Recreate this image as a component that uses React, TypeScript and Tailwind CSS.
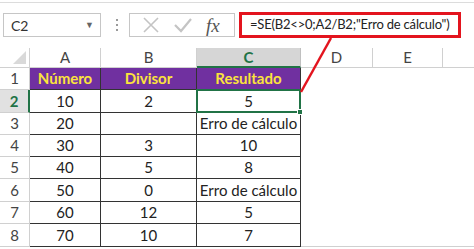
import React from "react";

const rows: { n: number; a: string; b: string; c: string }[] = [
  { n: 2, a: "10", b: "2", c: "5" },
  { n: 3, a: "20", b: "", c: "Erro de cálculo" },
  { n: 4, a: "30", b: "3", c: "10" },
  { n: 5, a: "40", b: "5", c: "8" },
  { n: 6, a: "50", b: "0", c: "Erro de cálculo" },
  { n: 7, a: "60", b: "12", c: "5" },
  { n: 8, a: "70", b: "10", c: "7" },
];

const font = { fontFamily: "Lato, 'Open Sans', sans-serif" };

export default function App() {
  return (
    <div className="relative w-[474px] h-[249px] overflow-hidden bg-white" style={font}>
      {/* formula bar area */}
      <div className="mt-[2px] border-t border-[#dcdcdc] h-[46px] flex items-start pt-[10px]">
        <div className="ml-[3px] w-[98px] h-[24px] border border-[#c6c6c6] flex items-center justify-between pl-[7px] pr-[6px] text-[14px] text-[#333]">
          <span>C2</span>
          <span className="text-[9px] text-[#666]">▼</span>
        </div>
        <div className="ml-[14px] w-[3px] h-[24px] flex flex-col items-center justify-center gap-[3px]">
          <span className="w-[2px] h-[2px] bg-[#9a9a9a]" />
          <span className="w-[2px] h-[2px] bg-[#9a9a9a]" />
          <span className="w-[2px] h-[2px] bg-[#9a9a9a]" />
        </div>
        <div className="ml-[11px] w-[106px] h-[24px] border border-[#c6c6c6] flex items-center">
          <svg width="18" height="18" viewBox="0 0 18 18" className="ml-[12px]">
            <path d="M2 2 L16 16 M16 2 L2 16" stroke="#c4c4c4" strokeWidth="1.6" />
          </svg>
          <svg width="20" height="18" viewBox="0 0 20 18" className="ml-[13px]">
            <path d="M2 9 L8 15 L18 3" stroke="#c4c4c4" strokeWidth="2.2" fill="none" />
          </svg>
          <span
            className="ml-[13px] text-[19px] italic text-[#555] leading-none"
            style={{ fontFamily: "'Liberation Serif', serif" }}
          >
            fx
          </span>
        </div>
        <div className="ml-[4px] mt-[-1px] w-[222px] h-[26px] border-[3px] border-[#e3141e] flex items-center pl-[8px] text-[13px] tracking-[-0.2px] text-[#222] whitespace-nowrap">
          =SE(B2&lt;&gt;0;A2/B2;"Erro de cálculo")
        </div>
      </div>

      {/* sheet grid */}
      <div className="grid grid-cols-[30px_71px_96px_104px_72px_70px_1fr] grid-rows-[20px_22px_23px_22px_22px_22px_23px_22px_23px] text-[15px] text-[#222]">
        {/* column headers */}
        <div className="relative border-r border-b border-[#d0d0d0]">
          <div className="absolute right-[3px] bottom-[3px] w-0 h-0 border-l-[13px] border-l-transparent border-b-[13px] border-b-[#d9d9d9]" />
        </div>
        {["A", "B"].map((l) => (
          <div key={l} className="flex items-center justify-center border-r border-b border-[#d0d0d0] text-[#444]">{l}</div>
        ))}
        <div className="flex items-center justify-center bg-[#d6d6d6] border-r border-[#c0c0c0] border-b-2 border-b-[#217346] text-[#217346] font-bold">C</div>
        {["D", "E"].map((l) => (
          <div key={l} className="flex items-center justify-center border-r border-b border-[#d0d0d0] text-[#444]">{l}</div>
        ))}
        <div className="border-b border-[#d0d0d0]" />

        {/* row 1 */}
        <div className="flex items-center justify-center border-r border-b border-[#d0d0d0] text-[#444]">1</div>
        {["Número", "Divisor", "Resultado"].map((h) => (
          <div key={h} className="flex items-center justify-center bg-[#7030a0] border-r border-b border-[#333] font-bold text-[#fbe43c]">{h}</div>
        ))}
        <div />
        <div />
        <div />

        {rows.map((r, i) => {
          const sel = r.n === 2;
          const last = i === rows.length - 1;
          return (
            <React.Fragment key={r.n}>
              <div
                className={
                  sel
                    ? "flex items-center justify-center bg-[#e1e1e1] border-r-2 border-r-[#217346] border-b border-[#d0d0d0] text-[#217346] font-bold"
                    : "flex items-center justify-center border-r border-b border-[#d0d0d0] text-[#444]"
                }
              >
                {r.n}
              </div>
              <div className="flex items-center justify-center border-r border-b border-[#333]">{r.a}</div>
              <div className="flex items-center justify-center border-r border-b border-[#333]">{r.b}</div>
              {sel ? (
                <div className="relative flex items-center justify-center border-2 border-[#217346] mt-[-1px] ml-[-1px]">
                  {r.c}
                  <div className="absolute right-[-4px] bottom-[-4px] w-[6px] h-[6px] bg-[#217346] border border-white" />
                </div>
              ) : (
                <div className="flex items-center justify-center border-r border-b border-[#333] whitespace-nowrap">{r.c}</div>
              )}
              <div className={last ? "border-b border-[#d0d0d0]" : ""} />
              <div className={last ? "border-b border-[#d0d0d0]" : ""} />
              <div className={last ? "border-b border-[#d0d0d0]" : ""} />
            </React.Fragment>
          );
        })}
      </div>

      {/* callout line */}
      <svg className="absolute left-0 top-0 pointer-events-none" width="474" height="249">
        <line x1="331" y1="38" x2="301" y2="92" stroke="#e3141e" strokeWidth="2.5" />
      </svg>
    </div>
  );
}
